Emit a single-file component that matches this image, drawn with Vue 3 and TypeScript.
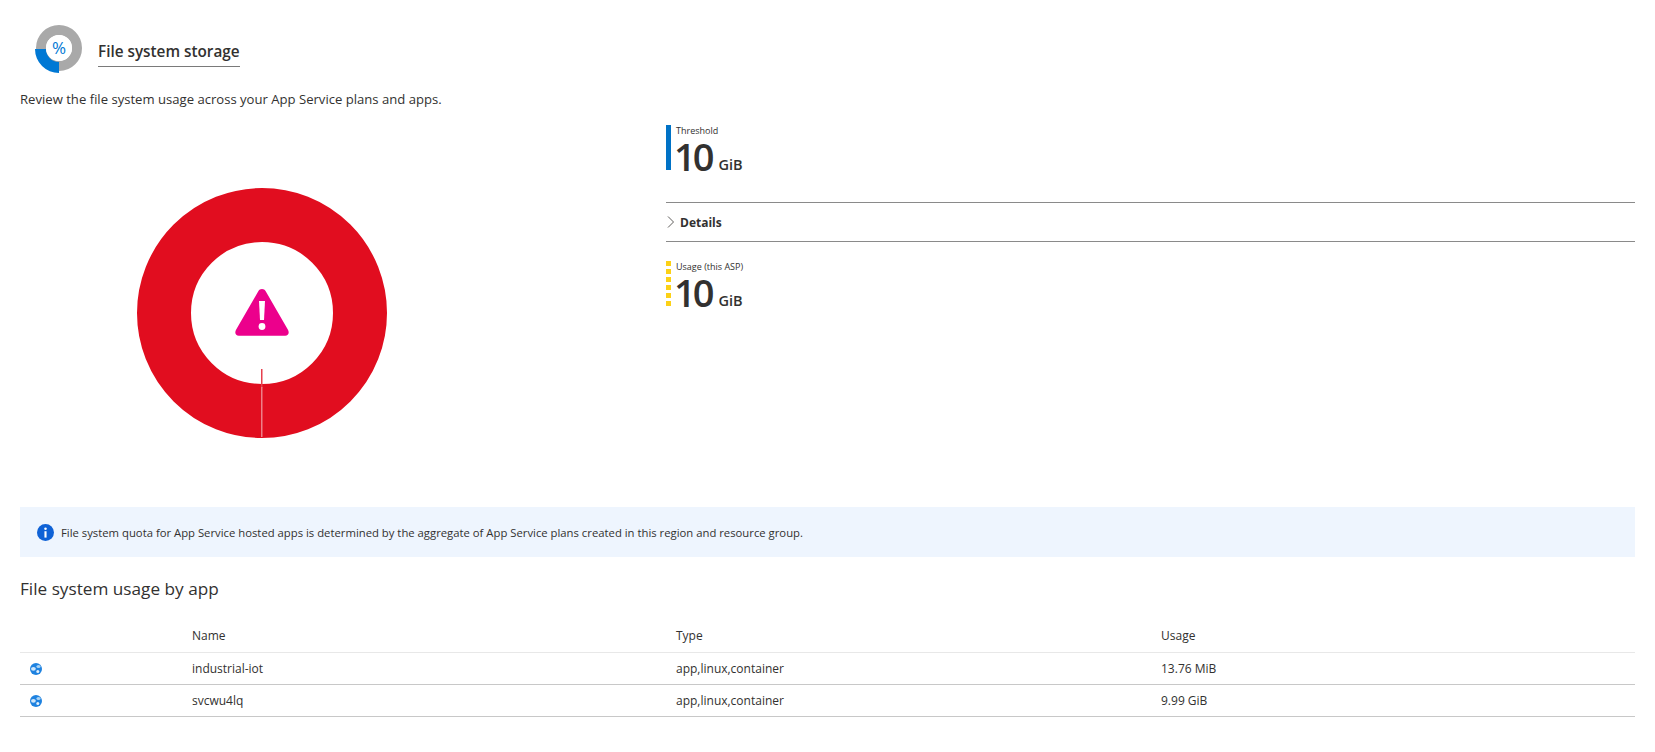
<script setup lang="ts">
interface AppRow {
  name: string;
  type: string;
  usage: string;
}

const rows: AppRow[] = [
  { name: "industrial-iot", type: "app,linux,container", usage: "13.76 MiB" },
  { name: "svcwu4lq", type: "app,linux,container", usage: "9.99 GiB" },
];
</script>

<template>
  <div class="page">
    <header class="head">
      <svg class="head__icon" width="48" height="48" viewBox="0 0 48 48">
        <circle cx="24" cy="23" r="18" fill="none" stroke="#a9a9a9" stroke-width="10" />
        <path d="M0 24h11a13 13 0 0 0 13 13v11A24 24 0 0 1 0 24z" fill="#0078d4" />
        <circle cx="24" cy="23" r="13" fill="#fff" />
        <text x="24" y="29" text-anchor="middle" class="head__pct">%</text>
      </svg>
      <h1 class="head__title">File system storage</h1>
    </header>
    <p class="intro">Review the file system usage across your App Service plans and apps.</p>

    <section class="overview">
      <div class="overview__chart">
        <svg width="250" height="250" viewBox="0 0 250 250">
          <circle cx="125" cy="125" r="98" fill="none" stroke="#e10d1f" stroke-width="54" />
          <rect x="124" y="181" width="1.5" height="19" fill="#e6404e" />
          <rect x="124" y="199" width="1.5" height="50" fill="#ee7f88" />
          <path
            d="M125 101c1.6 0 2.9.9 3.7 2.3l22.1 38.3c.6 1 .9 1.9.9 2.8 0 1.8-1.4 3.3-3.5 3.3h-46.4c-2.1 0-3.5-1.5-3.5-3.3 0-.9.3-1.8.9-2.8l22.1-38.3c.8-1.4 2.1-2.3 3.7-2.3z"
            fill="#ec008c"
          />
          <path d="M122 113h6l-1 19h-4z" fill="#fff" />
          <circle cx="125" cy="138.500" r="3.400" fill="#fff" />
        </svg>
      </div>
      <div class="overview__stats">
        <div class="stat">
          <span class="stat__bar stat__bar--solid"></span>
          <div class="stat__body">
            <div class="stat__label">Threshold</div>
            <div class="stat__value">10<span class="stat__unit">GiB</span></div>
          </div>
        </div>
        <div class="details">
          <svg width="10" height="14" viewBox="0 0 10 14">
            <path d="M2 1.500 7.500 7 2 12.500" fill="none" stroke="#605e5c" stroke-width="1" />
          </svg>
          <span>Details</span>
        </div>
        <div class="stat">
          <span class="stat__bar stat__bar--dashed"></span>
          <div class="stat__body">
            <div class="stat__label">Usage (this ASP)</div>
            <div class="stat__value">10<span class="stat__unit">GiB</span></div>
          </div>
        </div>
      </div>
    </section>

    <div class="info">
      <svg width="17" height="17" viewBox="0 0 16 16">
        <circle cx="8" cy="8" r="8" fill="#0f62d6" />
        <rect x="7" y="6.800" width="2" height="6" fill="#fff" />
        <circle cx="8" cy="4.500" r="1.200" fill="#fff" />
      </svg>
      <span>File system quota for App Service hosted apps is determined by the aggregate of App Service plans created in this region and resource group.</span>
    </div>

    <h2 class="section-title">File system usage by app</h2>

    <table class="apps">
      <colgroup>
        <col class="apps__icon" />
        <col class="apps__name" />
        <col class="apps__type" />
        <col />
      </colgroup>
      <thead>
        <tr>
          <th></th>
          <th>Name</th>
          <th>Type</th>
          <th>Usage</th>
        </tr>
      </thead>
      <tbody>
        <tr v-for="row in rows" :key="row.name">
          <td>
            <svg class="globe" width="12" height="12" viewBox="0 0 12 12">
              <circle cx="6" cy="6" r="6" fill="#1e82e0" />
              <ellipse cx="3.400" cy="5.800" rx="2.400" ry="1.900" fill="#cfe6fa" />
              <ellipse cx="8.500" cy="3.600" rx="2.100" ry="1.500" fill="#a9d3f5" />
              <circle cx="7.800" cy="8.400" r="1.500" fill="#e2f0fc" />
            </svg>
          </td>
          <td>{{ row.name }}</td>
          <td>{{ row.type }}</td>
          <td>{{ row.usage }}</td>
        </tr>
      </tbody>
    </table>
  </div>
</template>

<style>
html,
body {
  margin: 0;
  background: #fff;
}
</style>

<style scoped>
.page {
  padding: 25px 20px 0;
  font-family: "Open Sans", "Liberation Sans", sans-serif;
  color: #323130;
  font-size: 12px;
}

.head {
  display: flex;
  align-items: flex-start;
  padding-left: 15px;
  height: 65px;
}

.head__icon {
  display: block;
}

.head__pct {
  font-size: 17px;
  font-weight: 500;
  fill: #0078d4;
}

.head__title {
  margin: 14px 0 0 15px;
  height: 27px;
  line-height: 24px;
  font-size: 15.300px;
  font-weight: 600;
  border-bottom: 1px solid #7a7a7a;
}

.intro {
  margin: 0;
  line-height: 19px;
  font-size: 13.100px;
}

.overview {
  display: flex;
  height: 398px;
}

.overview__chart {
  width: 646px;
  padding: 79px 0 0 117px;
  box-sizing: border-box;
}

.overview__chart svg {
  display: block;
}

.overview__stats {
  flex: 1;
  padding-top: 16px;
}

.stat {
  display: flex;
  height: 45px;
}

.stat__bar {
  width: 5px;
  height: 45px;
  margin-right: 5px;
}

.stat__bar--solid {
  background: #0072c6;
}

.stat__bar--dashed {
  background: repeating-linear-gradient(#fcd116 0 5px, transparent 5px 8px);
}

.stat__label {
  font-size: 9px;
  line-height: 12px;
}

.stat__value {
  margin-left: -2px;
  font-size: 38px;
  font-weight: 600;
  line-height: 39px;
  letter-spacing: -3px;
}

.stat__unit {
  margin-left: 7px;
  font-size: 14.500px;
  font-weight: 600;
  letter-spacing: 0;
  vertical-align: 1.500px;
}

.details {
  display: flex;
  align-items: center;
  gap: 4px;
  height: 38px;
  margin: 32px 0 19px;
  font-size: 12px;
  font-weight: 700;
  border-top: 1px solid #8a8a8a;
  border-bottom: 1px solid #8a8a8a;
}

.info {
  display: flex;
  align-items: center;
  gap: 7px;
  height: 50px;
  padding-left: 17px;
  background: #eef5fe;
  font-size: 11.300px;
}

.section-title {
  margin: 20px 0 0;
  font-size: 17.200px;
  line-height: 24px;
  font-weight: 400;
}

.apps {
  width: 100%;
  margin-top: 20px;
  table-layout: fixed;
  border-collapse: separate;
  border-spacing: 0;
  font-size: 12px;
}

.apps__icon {
  width: 172px;
}

.apps__name {
  width: 484px;
}

.apps__type {
  width: 485px;
}

.apps th {
  height: 32px;
  padding: 0 0 2px;
  box-sizing: border-box;
  text-align: left;
  font-weight: 400;
  border-bottom: 1px solid #e8e8e8;
}

.apps td {
  height: 32px;
  padding: 0;
  box-sizing: border-box;
  border-bottom: 1px solid #c8c8c8;
}

.globe {
  display: block;
  margin-left: 10px;
}
</style>
